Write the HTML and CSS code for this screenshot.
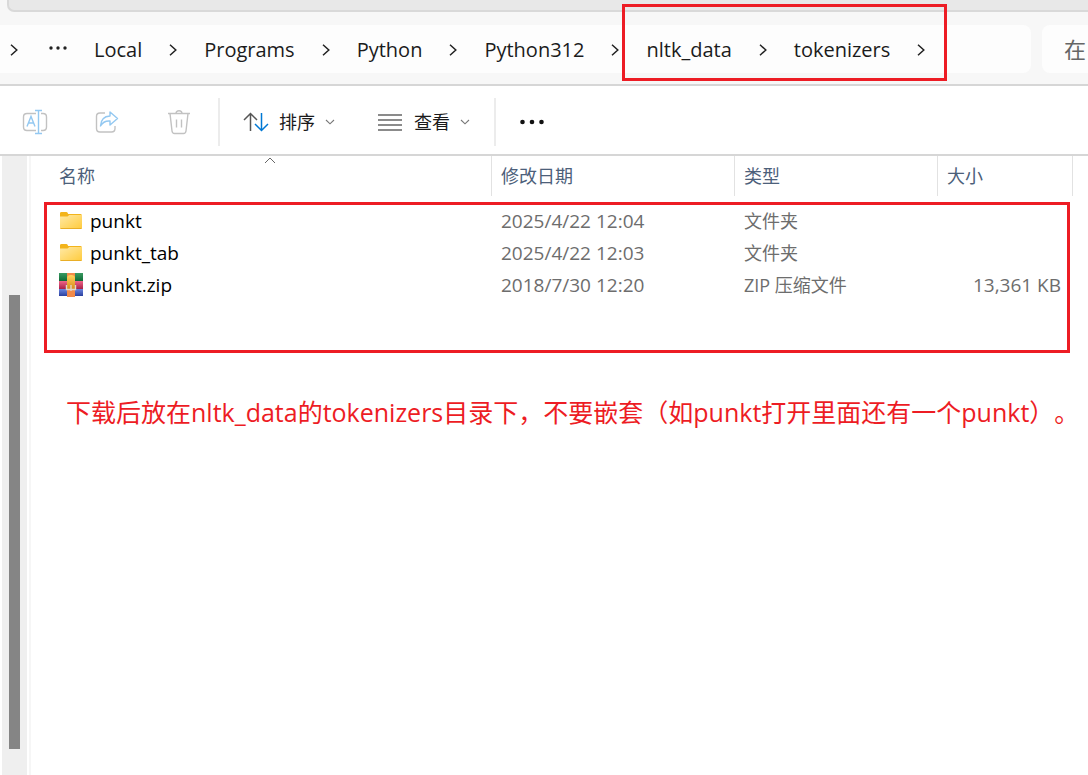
FILE: index.html
```html
<!DOCTYPE html>
<html lang="zh-CN">
<head>
<meta charset="utf-8">
<title>tokenizers</title>
<link rel="stylesheet" href="styles.css">
</head>
<body>
<svg class="defs" aria-hidden="true">
  <symbol id="chev" viewBox="0 0 8 12"><path d="M1 0.8 6.8 6 1 11.2" fill="none" stroke="#222" stroke-width="1.5"/></symbol>
  <symbol id="down" viewBox="0 0 10 6"><path d="M1 1 5 4.8 9 1" fill="none" stroke="#777" stroke-width="1.1"/></symbol>
  <symbol id="folder" viewBox="0 0 24 20">
    <path d="M1 2.200Q1 1 2.500 1H7.500Q8.500 1 9.200 3H21.500Q23 3 23 4.500V8H1Z" fill="#f3b41b"/>
    <path d="M1 5.500H8.500L10.300 4H23V17Q23 18 21.500 18H2.500Q1 18 1 17Z" fill="url(#fold)"/>
    <path d="M1.500 17.500H22.500" stroke="#e9ae27"/>
  </symbol>
  <linearGradient id="fold" x1="0" y1="0" x2="1" y2="1"><stop offset="0" stop-color="#ffe9a6"/><stop offset="1" stop-color="#ffcb3c"/></linearGradient>
  <linearGradient id="green" x1="0" y1="0" x2="0" y2="1"><stop offset="0" stop-color="#3a9a62"/><stop offset="1" stop-color="#0d6b35"/></linearGradient>
  <linearGradient id="red" x1="0" y1="0" x2="0" y2="1"><stop offset="0" stop-color="#f0668a"/><stop offset="1" stop-color="#a82048"/></linearGradient>
  <linearGradient id="blue" x1="0" y1="0" x2="0" y2="1"><stop offset="0" stop-color="#6a86e0"/><stop offset="1" stop-color="#2a3f9e"/></linearGradient>
  <linearGradient id="gold" x1="0" y1="0" x2="0" y2="1"><stop offset="0" stop-color="#ffd45c"/><stop offset="1" stop-color="#d98a1c"/></linearGradient>
</svg>

<div class="tabstrip"><div class="tabs"></div></div>

<header class="nav">
  <nav class="address" aria-label="路径">
    <svg class="chev"><use href="#chev"/></svg>
    <button class="dots" aria-label="更多路径"><svg width="18" height="4" viewBox="0 0 18 4"><g fill="#222"><circle cx="2" cy="2" r="1.700"/><circle cx="9" cy="2" r="1.700"/><circle cx="16" cy="2" r="1.700"/></g></svg></button>
    <button>Local</button><svg class="chev"><use href="#chev"/></svg>
    <button>Programs</button><svg class="chev"><use href="#chev"/></svg>
    <button>Python</button><svg class="chev"><use href="#chev"/></svg>
    <button>Python312</button><svg class="chev"><use href="#chev"/></svg>
    <span class="marked">
      <button>nltk_data</button><svg class="chev"><use href="#chev"/></svg>
      <button>tokenizers</button><svg class="chev"><use href="#chev"/></svg>
    </span>
  </nav>
  <input class="search" type="text" placeholder="在" aria-label="搜索">
</header>

<div class="toolbar">
  <button class="icon" aria-label="重命名" disabled>
    <svg width="26" height="26" viewBox="0 0 26 26" fill="none" stroke-width="1.400">
      <path d="M14 4.500H5Q1.500 4.500 1.500 8V18Q1.500 21.500 5 21.500H14M19 4.500H21Q24.500 4.500 24.500 8V18Q24.500 21.500 21 21.500H19" stroke="#c2c2c2"/>
      <path d="M5 17.500 9 7.500 13 17.500M6.500 14H11.500M13 1.500H20M13 24.500H20M16.500 1.500V24.500" stroke="#93c8f1"/>
    </svg>
  </button>
  <button class="icon" aria-label="共享" disabled>
    <svg width="26" height="26" viewBox="0 0 26 26" fill="none" stroke-width="1.400" stroke-linejoin="round">
      <path d="M11 4H6Q2.500 4 2.500 7.500V19.500Q2.500 23 6 23H17.500Q21 23 21 19.500V17" stroke="#c2c2c2"/>
      <path d="M16 3 23.500 9.500 16 16V12Q9.500 11.500 6.500 17Q7 7.500 16 7Z" stroke="#93c8f1"/>
    </svg>
  </button>
  <button class="icon" aria-label="删除" disabled>
    <svg width="26" height="26" viewBox="0 0 26 26" fill="none" stroke="#c2c2c2" stroke-width="1.400">
      <path d="M2 4.500H24M10 4.500Q10 1.700 13 1.700T16 4.500M4 4.500 6 22Q6.300 24.500 8.500 24.500H17.500Q19.700 24.500 20 22L22 4.500M10.500 10.500V18.500M15.500 10.500V18.500"/>
    </svg>
  </button>
  <span class="rule"></span>
  <button class="menu">
    <svg width="26" height="20" viewBox="0 0 26 20" fill="none" stroke-width="1.500"><path d="M7.500 19V1.500M1 8 7.500 1.500 14 8" stroke="#555"/><path d="M18.500 1V18.500M12 12 18.500 18.500 25 12" stroke="#0078d4"/></svg>
    <span>排序</span><svg class="down"><use href="#down"/></svg>
  </button>
  <button class="menu view">
    <svg width="26" height="17" viewBox="0 0 26 17" fill="none" stroke="#666" stroke-width="1.500"><path d="M0 1H24M0 6H24M0 11H24M0 16H24"/></svg>
    <span>查看</span><svg class="down"><use href="#down"/></svg>
  </button>
  <span class="rule"></span>
  <button class="more" aria-label="更多"><svg width="26" height="6" viewBox="0 0 26 6"><g fill="#111"><circle cx="3.500" cy="3" r="2.300"/><circle cx="13" cy="3" r="2.300"/><circle cx="22.500" cy="3" r="2.300"/></g></svg></button>
</div>

<div class="body">
  <aside class="side"><div class="track"><div class="thumb"></div></div></aside>
  <main class="content">
    <div class="list">
      <table>
        <thead>
          <tr>
            <th class="name" aria-sort="ascending"><svg class="sorted" width="12" height="7" viewBox="0 0 12 7"><path d="M1 6 6 1 11 6" fill="none" stroke="#666"/></svg>名称</th>
            <th class="date">修改日期</th><th class="type">类型</th><th class="size">大小</th>
          </tr>
        </thead>
        <tbody>
          <tr><td><span class="file"><svg width="24" height="20"><use href="#folder"/></svg>punkt</span></td><td class="num">2025/4/22 12:04</td><td>文件夹</td><td></td></tr>
          <tr><td><span class="file"><svg width="24" height="20"><use href="#folder"/></svg>punkt_tab</span></td><td class="num">2025/4/22 12:03</td><td>文件夹</td><td></td></tr>
          <tr><td><span class="file"><svg width="24" height="24" viewBox="0 0 24 24">
            <rect y="0" width="24" height="8" fill="url(#green)"/><rect y="8" width="24" height="8" fill="url(#red)"/><rect y="16" width="24" height="7" fill="url(#blue)"/>
            <rect x="8" width="8" height="24" fill="#f28a4a"/><path d="M8 16V5Q8 2 12 2T16 5V16Z" fill="url(#gold)"/>
            <path d="M7.500 12V16.500H16.500V12M12 12V18" fill="none" stroke="#ddd8cc" stroke-width="1.400"/>
          </svg>punkt.zip</span></td><td class="num">2018/7/30 12:20</td><td>ZIP 压缩文件</td><td class="num">13,361 KB</td></tr>
        </tbody>
      </table>
    </div>
    <p class="note">下载后放在nltk_data的tokenizers目录下，不要嵌套（如punkt打开里面还有一个punkt）。</p>
  </main>
</div>
</body>
</html>
```

FILE: styles.css
```css
* { box-sizing: border-box; }
body {
  margin: 0;
  min-height: 100vh;
  display: flex;
  flex-direction: column;
  background: #fff;
  color: #1b1b1b;
  font: 18px/24px "Open Sans", "Noto Sans CJK SC", sans-serif;
  overflow-x: hidden;
}
button {
  border: 0;
  padding: 0;
  background: none;
  color: inherit;
  font: inherit;
  display: flex;
  align-items: center;
}
svg { flex: none; }
.defs { position: absolute; width: 0; height: 0; }

.tabstrip { height: 12px; padding-left: 7px; background: #f7f7f7; }
.tabs {
  height: 12px;
  background: #e8e8e8;
  border: 2px solid #d9d9d9;
  border-width: 0 0 2px 2px;
  border-bottom-left-radius: 7px;
}

.nav {
  display: flex;
  gap: 11px;
  padding: 13px 0 11px;
  background: #f7f7f7;
  border-bottom: 2px solid #d6d6d6;
}
.address {
  flex: 1;
  height: 48px;
  display: flex;
  align-items: center;
  padding: 2px 0 0 10px;
  background: #fdfdfd;
  border-radius: 0 8px 8px 0;
  font-size: 20px;
}
.address button { white-space: nowrap; }
.chev { width: 8px; height: 12px; margin: 0 27px; }
.address > .chev:first-child { margin: 0 31px 0 0; }
.dots { margin-right: 27px; padding-bottom: 4px; }
.marked { position: relative; display: flex; align-items: center; }
.marked::after {
  content: "";
  position: absolute;
  inset: -34px 5px -19px -24px;
  border: 3px solid #ed1c24;
  pointer-events: none;
}
.search {
  width: 46px;
  height: 48px;
  border: 0;
  padding: 0 0 0 22px;
  border-radius: 8px 0 0 8px;
  background: #fdfdfd;
  font: 22px/28px "Open Sans", "Noto Sans CJK SC", sans-serif;
}
.search::placeholder { color: #666; opacity: 1; }

.toolbar {
  display: flex;
  align-items: center;
  height: 70px;
  padding: 4px 0 0 22px;
  border-bottom: 2px solid #d6d6d6;
}
.icon { margin-right: 46px; }
.icon + .rule { margin-left: -20px; }
.rule { width: 2px; height: 48px; margin-right: 23px; background: #ececec; }
.menu { gap: 10px; }
.view { margin: 0 24px 0 43px; }
.down { width: 10px; height: 6px; }

.body { flex: 1; display: flex; }
.side { flex: none; width: 31px; padding-left: 2px; border-right: 2px solid #f6f6f6; }
.track { width: 25px; height: 100%; padding: 139px 0 26px 7px; background: #efefef; }
.thumb { width: 11px; height: 100%; background: #858585; }

.content { flex: 1; min-width: 0; padding: 0 18px 0 13px; }
.list { position: relative; padding: 0 0 52px 5px; }
.list::after {
  content: "";
  position: absolute;
  inset: 46px 0 0;
  border: 3px solid #ed1c24;
  pointer-events: none;
}
table { width: calc(100% + 3px); border-collapse: separate; border-spacing: 0; table-layout: fixed; }
th {
  position: relative;
  height: 40px;
  padding: 0 9px;
  border-right: 1px solid #e2e2e2;
  text-align: left;
  font-weight: 400;
  color: #4c607a;
}
.date { width: 243px; }
.type { width: 203px; }
.size { width: 135px; }
.sorted { position: absolute; top: 1px; left: 50%; transform: translateX(-50%); }
tbody::before { content: ""; display: table-row; height: 9px; }
td { height: 32px; padding: 0 9px; color: #6d6d6d; white-space: nowrap; }
th:first-child, td:first-child { padding-left: 10px; }
td:last-child { padding-right: 12px; text-align: right; }
.num { font-size: 19px; }
.file { display: flex; align-items: center; gap: 7px; color: #000; font-size: 19px; }
.note {
  margin: 41px 0 0;
  padding-left: 22px;
  color: #ed1c24;
  font-size: 25px;
  line-height: 36px;
  white-space: nowrap;
  text-spacing-trim: space-all;
}
```
